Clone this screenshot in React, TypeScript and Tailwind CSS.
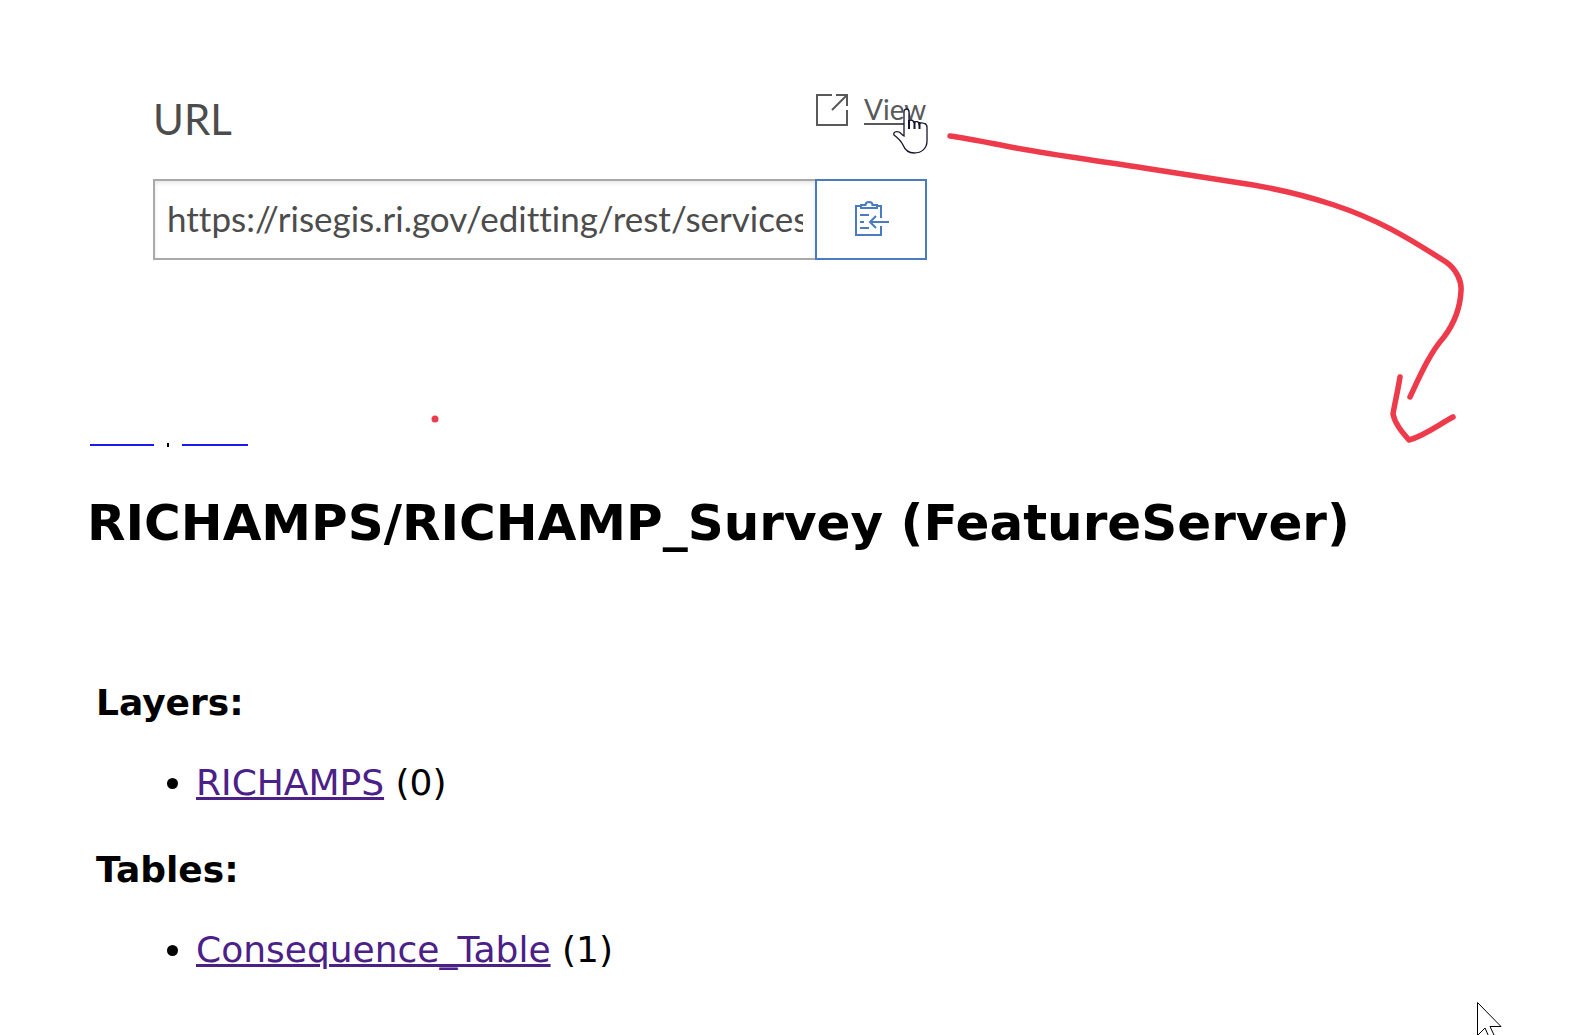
const services = [
  { title: 'Layers:', name: 'RICHAMPS', id: 0 },
  { title: 'Tables:', name: 'Consequence_Table', id: 1 },
];

function LaunchIcon() {
  return (
    <svg className="h-8 w-8 shrink-0" viewBox="0 0 32 32" fill="none" stroke="#595959" strokeWidth="2" aria-hidden="true">
      <path d="M16 1H1v30h30V16M20 1h11v11M31 1L16 16" />
    </svg>
  );
}

function ClipboardIcon() {
  return (
    <svg className="h-9 w-9" viewBox="0 0 36 36" fill="none" stroke="#4a7bc1" strokeWidth="2" aria-hidden="true">
      <path d="M7 5H3v29h25v-9M24 5h4v12" />
      <path d="M8 7V4h4.500c0-2 1.500-3 3.500-3s3.500 1 3.500 3H24v3z" />
      <path d="M7 14h9M7 21h4M7 27h9M36 21H17M23 15l-6 6 6 6" />
    </svg>
  );
}

function HandCursor() {
  return (
    <svg className="h-[47px] w-[35px]" viewBox="0 0 35 47" aria-hidden="true">
      <path
        d="M11 28V4c0-4 5-4 5 0v10c1-3 5-2 5 1 1-2 5-2 5 1 2-2 8-1 8 3v14c0 7-5 12-13 12-6 0-9-3-11-8-2-4-5-7-9-10-1-3 2-4 5-3 2 1 3 3 5 4z"
        fill="#fff"
        stroke="#15152a"
        strokeWidth="1.300"
      />
      <path d="M16 12v9M21.500 13v8M26.500 14v7" stroke="#15152a" strokeWidth="2" fill="none" />
    </svg>
  );
}

// Hand drawn arrow from the View link to the service page
function Annotation() {
  return (
    <svg
      className="pointer-events-none absolute top-0 left-0 h-[460px] w-[1500px]"
      viewBox="0 0 1500 460"
      fill="none"
      stroke="#ee3b4b"
      strokeWidth="5.500"
      strokeLinecap="round"
      strokeLinejoin="round"
      aria-hidden="true"
    >
      <path d="M950 136C972 139 994 144 1016 148C1058 156 1101 161 1144 168L1234 182C1270 187 1301 194 1334 205C1376 219 1404 235 1446 262C1456 269 1462 281 1461 291C1460 311 1453 325 1444 337C1429 354 1419 378 1410 397" />
      <path d="M1400 377C1398 390 1395 402 1393 414C1395 424 1402 432 1409 440C1424 436 1438 425 1453 417" />
      <circle cx="435" cy="419" r="3.500" fill="#ee3b4b" stroke="none" />
    </svg>
  );
}

export default function App() {
  return (
    <div className="relative min-h-screen overflow-hidden bg-white">
      <section className="mx-[153px] max-w-[774px] pt-[92px] font-['Lato',sans-serif] text-[#4c4c4c] [font-variant-ligatures:none]">
        <div className="flex h-[87px] items-start justify-between">
          <label htmlFor="service-url" className="text-[42px] leading-[54px]">
            URL
          </label>
          <a href="#service" className="relative flex items-start gap-4 pt-[2px] text-[28px] leading-[30px] text-[#595959]">
            <LaunchIcon />
            <span className="w-[63px] underline decoration-2 underline-offset-3">View</span>
            <span className="pointer-events-none absolute top-4 -right-px">
              <HandCursor />
            </span>
          </a>
        </div>
        <div className="flex h-[81px]">
          <input
            id="service-url"
            type="text"
            readOnly
            defaultValue="https://risegis.ri.gov/editting/rest/services"
            className="min-w-0 flex-1 border-2 border-r-0 border-[#a9a9a9] px-3 pb-[2px] text-[35px] shadow-[inset_0_2px_4px_rgba(0,0,0,0.1)] outline-none"
          />
          <button type="button" aria-label="Copy" className="flex w-28 items-center justify-center border-2 border-[#4a7bc1] pb-px">
            <ClipboardIcon />
          </button>
        </div>
      </section>

      <main id="service" className="px-[87px] pt-[183px] font-['Verdana','DejaVu_Sans',sans-serif] text-black">
        <div className="flex h-1 items-center pl-[3px]" aria-hidden="true">
          <span className="h-[2px] w-16 bg-[#1a1aee]" />
          <span className="mx-[13px] h-1 w-[2px] bg-black" />
          <span className="h-[2px] w-[66px] bg-[#1a1aee]" />
        </div>
        <h1 className="mt-[47px] text-[50px] leading-[58px] font-bold whitespace-nowrap">
          RICHAMPS/RICHAMP_Survey (FeatureServer)
        </h1>
        <div className="mt-[129px] px-[9px] text-[36px] leading-[44px]">
          {services.map((service) => (
            <section key={service.title} className="mb-[43px]">
              <h2 className="mb-9 font-bold">{service.title}</h2>
              <ul className="list-disc pl-[100px]">
                <li>
                  <a href="#service" className="text-[#4b2087] underline decoration-[3px]">
                    {service.name}
                  </a>{' '}
                  ({service.id})
                </li>
              </ul>
            </section>
          ))}
        </div>
      </main>

      <Annotation />
      <svg className="pointer-events-none absolute right-[82px] top-[1001px] h-[34px] w-[27px]" viewBox="0 0 27 34" aria-hidden="true">
        <path d="M1.500 1.500v33l7.500-7.500 4 9 5-2-4-8.500h11z" fill="#fff" stroke="#000" />
      </svg>
    </div>
  );
}
